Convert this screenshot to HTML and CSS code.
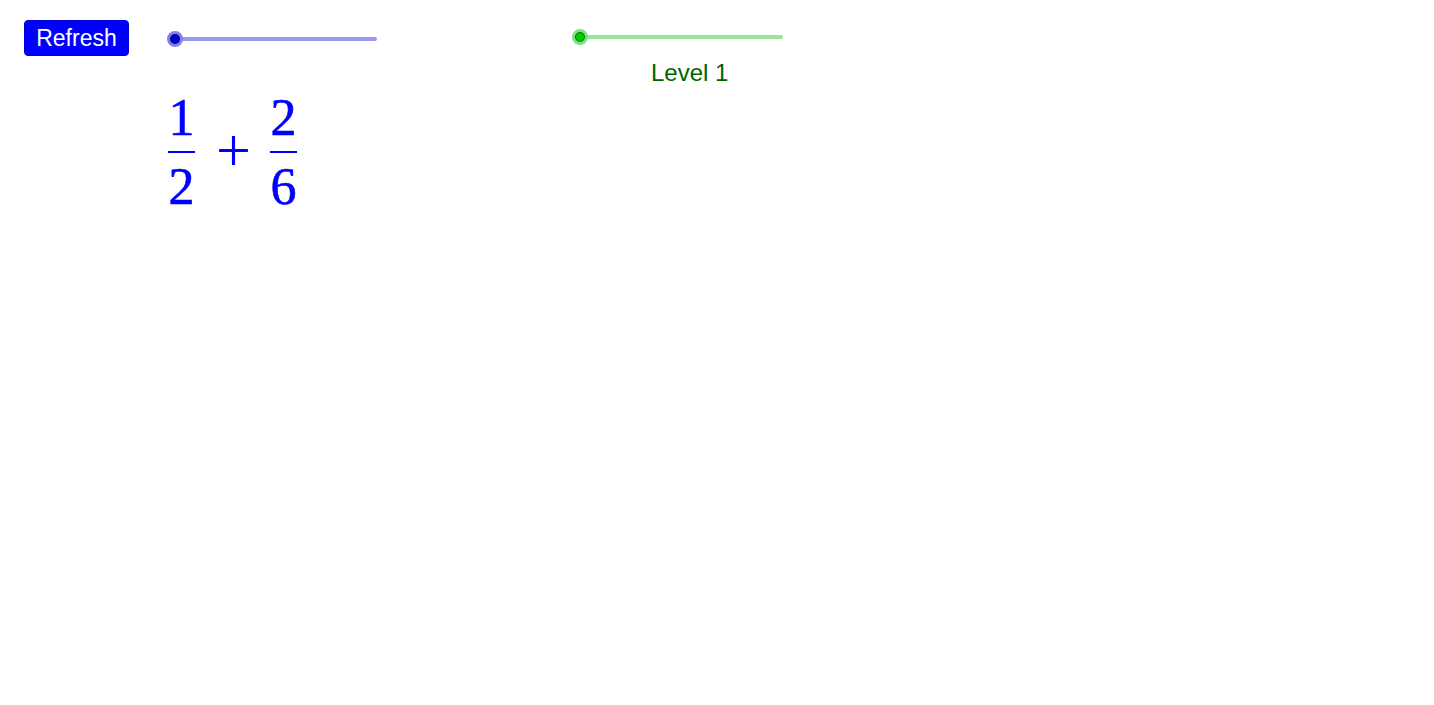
FILE: index.html
```html
<!DOCTYPE html>
<html>
<head>
<meta charset="utf-8">
<link rel="stylesheet" href="styles.css">
</head>
<body>
<div class="canvas">
  <button class="refresh">Refresh</button>
  <div class="slider slider-blue">
    <div class="track"></div>
    <div class="knob"></div>
  </div>
  <div class="slider slider-green">
    <div class="track"></div>
    <div class="knob"></div>
  </div>
  <div class="level">Level 1</div>
  <div class="expr">
    <span class="frac"><span class="num">1</span><span class="bar"></span><span class="den">2</span></span>
    <span class="op">+</span>
    <span class="frac"><span class="num">2</span><span class="bar"></span><span class="den">6</span></span>
  </div>
</div>
</body>
</html>
```

FILE: styles.css
```css
html, body {
  margin: 0;
  padding: 0;
  background: #ffffff;
}
.canvas {
  position: relative;
  width: 1434px;
  height: 705px;
  overflow: hidden;
  font-family: "Liberation Sans", Arial, sans-serif;
}
.refresh {
  position: absolute;
  left: 24px;
  top: 20px;
  width: 105px;
  height: 36px;
  margin: 0;
  padding: 0;
  border: 1px solid #0000d0;
  border-radius: 4px;
  background: #0000ff;
  color: #ffffff;
  font-family: "Liberation Sans", Arial, sans-serif;
  font-size: 23px;
  line-height: 34px;
  text-align: center;
}
.slider {
  position: absolute;
  height: 16px;
}
.slider .track {
  position: absolute;
  left: 0;
  right: 0;
  top: 6px;
  height: 4px;
  border-radius: 2px;
}
.slider .knob {
  position: absolute;
  left: -8px;
  top: 0;
  width: 10px;
  height: 10px;
  border-radius: 50%;
  border: 3px solid;
}
.slider-blue {
  left: 175px;
  top: 31px;
  width: 202px;
}
.slider-blue .track { background: #9999ee; }
.slider-blue .knob {
  background: #0000cc;
  border-color: #8080e6;
  box-shadow: inset 0 0 0 1px #000080;
}
.slider-green {
  left: 580px;
  top: 29px;
  width: 203px;
}
.slider-green .track { background: #99e699; }
.slider-green .knob {
  background: #00cc00;
  border-color: #80e080;
  box-shadow: inset 0 0 0 1px #006400;
}
.level {
  position: absolute;
  left: 651px;
  top: 59px;
  font-size: 24px;
  line-height: 28px;
  color: #006400;
}
.expr {
  position: absolute;
  left: 168px;
  top: 90px;
  display: flex;
  align-items: center;
  color: #0000ff;
  font-family: "Liberation Serif", "Times New Roman", serif;
}
.frac {
  display: flex;
  flex-direction: column;
  align-items: center;
  width: 27px;
}
.frac .num, .frac .den {
  font-size: 52px;
  line-height: 56px;
  -webkit-text-stroke: 0.6px #0000ff;
}
.frac .bar {
  width: 27px;
  height: 2px;
  background: #0000ff;
  margin: 5px 0 6px;
}
.op {
  display: flex;
  justify-content: center;
  width: 33px;
  margin: 0 20px 6px 22px;
  font-size: 62px;
  line-height: 62px;
}
```
